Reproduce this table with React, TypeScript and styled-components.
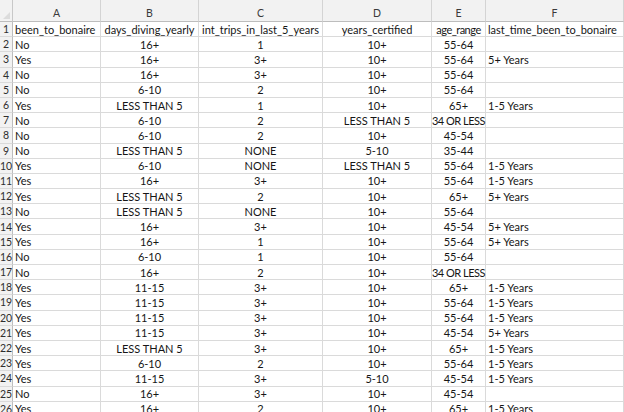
import React from "react";
import styled, { createGlobalStyle } from "styled-components";

const Global = createGlobalStyle`
  html, body { margin: 0; padding: 0; background: #ffffff; }
  body { font-family: Lato, "Open Sans", sans-serif; overflow: hidden; }
`;

const Sheet = styled.div`
  display: grid;
  grid-template-columns: 13px 88px 98px 124px 109px 54px 1fr;
  grid-template-rows: 22px;
  grid-auto-rows: 15.2px;
  width: 624px;
  height: 412px;
  overflow: hidden;
  font-size: 11px;
  color: #161616;
`;

const Row = styled.div`
  display: contents;
`;

const Corner = styled.div`
  position: relative;
  background: #f2f2f2;
  border-right: 1px solid #c8c8c8;
  border-bottom: 1px solid #bdbdbd;
  box-sizing: border-box;
  &::after {
    content: "";
    position: absolute;
    right: 2px;
    bottom: 2px;
    width: 0;
    height: 0;
    border-left: 7px solid transparent;
    border-bottom: 7px solid #dcdcdc;
  }
`;

const ColHead = styled.div`
  box-sizing: border-box;
  background: #f2f2f2;
  border-right: 1px solid #d4d4d4;
  border-bottom: 1px solid #bdbdbd;
  display: flex;
  align-items: center;
  justify-content: center;
  padding-top: 4px;
  color: #3a3a3a;
  font-size: 10.5px;
`;

const RowNum = styled.div`
  box-sizing: border-box;
  background: #f2f2f2;
  border-right: 1px solid #bdbdbd;
  border-bottom: 1px solid #dadada;
  display: flex;
  align-items: center;
  justify-content: center;
  color: #2e2e2e;
  font-size: 10.5px;
  white-space: nowrap;
`;

const Cell = styled.div<{ $align: "left" | "center"; $tight?: boolean }>`
  box-sizing: border-box;
  border-right: 1px solid #dadada;
  border-bottom: 1px solid #dadada;
  display: flex;
  align-items: center;
  justify-content: ${(p) => (p.$align === "center" ? "center" : "flex-start")};
  padding: 0 2px;
  white-space: nowrap;
  letter-spacing: ${(p) => (p.$tight ? "-0.5px" : "0")};
`;

const letters = ["A", "B", "C", "D", "E", "F"];
const aligns: ("left" | "center")[] = ["left", "center", "center", "center", "center", "left"];

const rows: string[][] = [
  ["been_to_bonaire", "days_diving_yearly", "int_trips_in_last_5_years", "years_certified", "age_range", "last_time_been_to_bonaire"],
  ["No", "16+", "1", "10+", "55-64", ""],
  ["Yes", "16+", "3+", "10+", "55-64", "5+ Years"],
  ["No", "16+", "3+", "10+", "55-64", ""],
  ["No", "6-10", "2", "10+", "55-64", ""],
  ["Yes", "LESS THAN 5", "1", "10+", "65+", "1-5 Years"],
  ["No", "6-10", "2", "LESS THAN 5", "34 OR LESS", ""],
  ["No", "6-10", "2", "10+", "45-54", ""],
  ["No", "LESS THAN 5", "NONE", "5-10", "35-44", ""],
  ["Yes", "6-10", "NONE", "LESS THAN 5", "55-64", "1-5 Years"],
  ["Yes", "16+", "3+", "10+", "55-64", "1-5 Years"],
  ["Yes", "LESS THAN 5", "2", "10+", "65+", "5+ Years"],
  ["No", "LESS THAN 5", "NONE", "10+", "55-64", ""],
  ["Yes", "16+", "3+", "10+", "45-54", "5+ Years"],
  ["Yes", "16+", "1", "10+", "55-64", "5+ Years"],
  ["No", "6-10", "1", "10+", "55-64", ""],
  ["No", "16+", "2", "10+", "34 OR LESS", ""],
  ["Yes", "11-15", "3+", "10+", "65+", "1-5 Years"],
  ["Yes", "11-15", "3+", "10+", "55-64", "1-5 Years"],
  ["Yes", "11-15", "3+", "10+", "55-64", "1-5 Years"],
  ["Yes", "11-15", "3+", "10+", "45-54", "5+ Years"],
  ["Yes", "LESS THAN 5", "3+", "10+", "65+", "1-5 Years"],
  ["Yes", "6-10", "2", "10+", "55-64", "1-5 Years"],
  ["Yes", "11-15", "3+", "5-10", "45-54", "1-5 Years"],
  ["No", "16+", "3+", "10+", "45-54", ""],
  ["Yes", "16+", "2", "10+", "65+", "1-5 Years"],
];

export default function App() {
  return (
    <>
      <Global />
      <Sheet>
        <Row>
          <Corner />
          {letters.map((l) => (
            <ColHead key={l}>{l}</ColHead>
          ))}
        </Row>
        {rows.map((r, i) => (
          <Row key={i}>
            <RowNum>{i + 1}</RowNum>
            {r.map((v, j) => (
              <Cell
                key={j}
                $align={i === 0 ? (j === 0 || j === 5 ? "left" : "center") : aligns[j]}
                $tight={j === 4 && v.length > 6}
              >
                {v}
              </Cell>
            ))}
          </Row>
        ))}
      </Sheet>
    </>
  );
}
